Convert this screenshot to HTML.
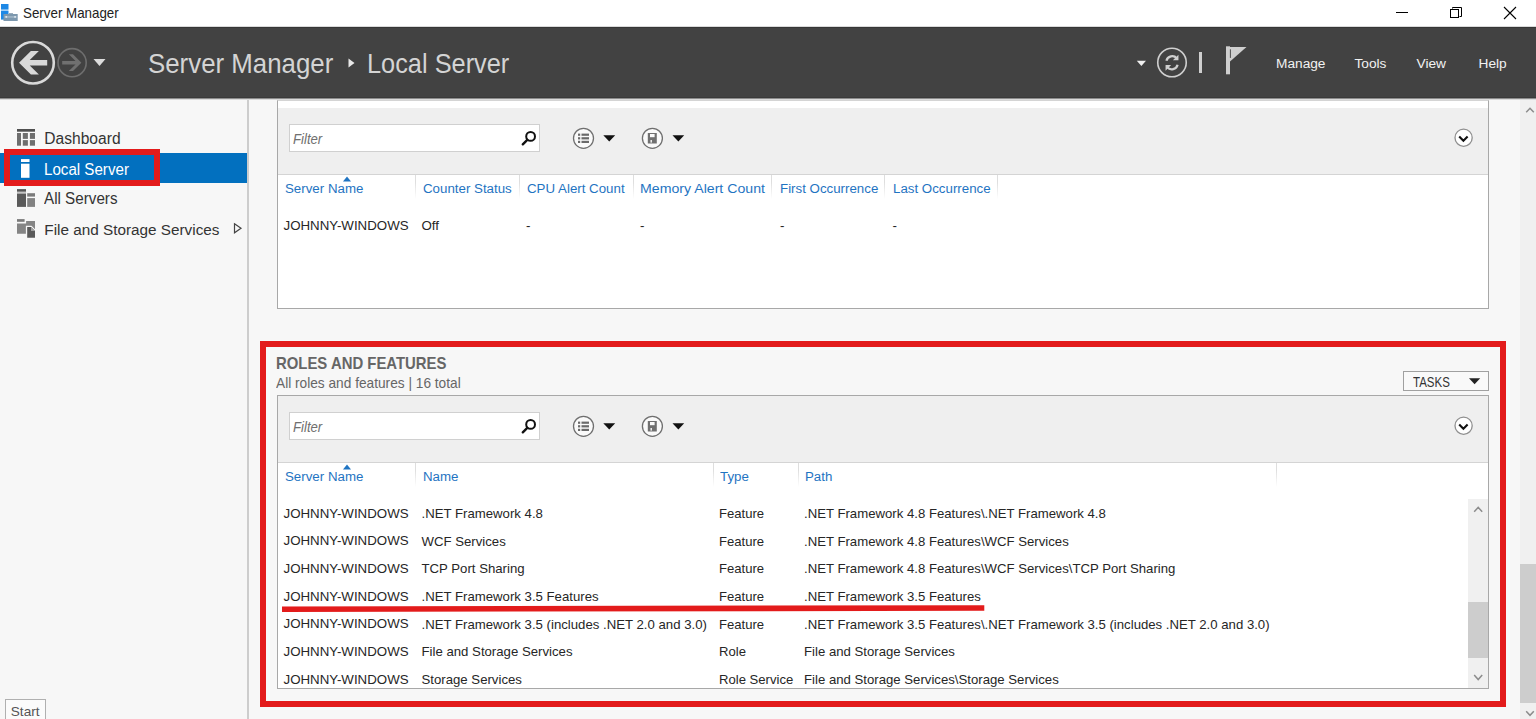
<!DOCTYPE html>
<html><head><meta charset="utf-8"><title>Server Manager</title>
<style>
html,body{margin:0;padding:0;width:1536px;height:719px;overflow:hidden;background:#f7f7f7;font-family:"Liberation Sans",sans-serif}
.r{position:absolute;margin:0;padding:0}
svg.r{overflow:visible}
.t{position:absolute;line-height:1;white-space:nowrap}
</style></head><body>
<div class="r" style="left:0px;top:0px;width:1536px;height:27px;background:#fff"></div>
<svg class="r" style="left:0;top:0" width="20" height="26" viewBox="0 0 20 26">
<rect x="1" y="4" width="7.5" height="5.6" fill="#1e88e5"/>
<rect x="1" y="10.6" width="7.5" height="9" fill="#1e88e5"/>
<rect x="9" y="13" width="4" height="0.9" fill="#8fa3b5"/>
<rect x="3.5" y="14" width="14.2" height="7" fill="#7d98ae"/>
<rect x="4.5" y="16.3" width="12.2" height="1.3" fill="#a9bccb"/>
<rect x="5.5" y="16.1" width="1.6" height="1.6" fill="#e6eef4"/>
<rect x="14.3" y="16.1" width="1.6" height="1.6" fill="#e6eef4"/>
</svg>
<div class="t " style="left:23.0px;top:6.34px;font-size:14.6px;color:#222;transform:scaleX(0.915);transform-origin:0 0">Server Manager</div>
<div class="r" style="left:1396px;top:12px;width:12px;height:1px;background:#000"></div>
<div class="r" style="left:1450px;top:9px;width:9px;height:9px;border:1px solid #000;box-sizing:border-box;background:#fff"></div>
<svg class="r" style="left:1448px;top:5px" width="16" height="16" viewBox="0 0 16 16"><path d="M4.5 3.5 V2.5 H13.5 V11.5 H11.5" fill="none" stroke="#000" stroke-width="1"/></svg>
<svg class="r" style="left:1502px;top:5px" width="16" height="16" viewBox="0 0 16 16"><path d="M2 2 L14 14 M14 2 L2 14" stroke="#000" stroke-width="1.1"/></svg>
<div class="r" style="left:0px;top:27px;width:1536px;height:71px;background:#424242"></div>
<div class="r" style="left:0px;top:27px;width:1536px;height:1px;background:#363636"></div>
<div class="r" style="left:0px;top:26px;width:1536px;height:1px;background:#dadada"></div>
<div class="r" style="left:0px;top:97px;width:1536px;height:1px;background:#3a3a3a"></div>
<div class="r" style="left:0px;top:98px;width:1536px;height:1px;background:#8c8c8c"></div>
<div class="r" style="left:0px;top:99px;width:1536px;height:1px;background:#dadada"></div>
<svg class="r" style="left:0;top:27px" width="120" height="71" viewBox="0 27 120 71">
<circle cx="33" cy="62.75" r="20.8" fill="none" stroke="#d9d9d9" stroke-width="2.6"/>
<path d="M30.9 50.9 H38.9 L29.75 60.05 H47.2 V65.45 H29.75 L38.9 74.6 H30.9 L19.05 62.75 Z" fill="#d9d9d9"/>
<circle cx="72.1" cy="62.7" r="14.1" fill="none" stroke="#6e6e6e" stroke-width="1.6"/>
<path d="M73 54.3 H68.8 L75.5 61 H62.2 V64.4 H75.5 L68.8 71.1 H73 L81.4 62.7 Z" fill="#707070"/>
<path d="M93.5 59 H105.5 L99.5 66 Z" fill="#dcdcdc"/>
</svg>
<div class="t " style="left:148.3px;top:50.47px;font-size:27.8px;color:#d4d4d4;transform:scaleX(0.93);transform-origin:0 0">Server Manager</div>
<svg class="r" style="left:345px;top:55px" width="12" height="14"><path d="M3.5 3.5 L9.5 8 L3.5 12.5 Z" fill="#e8e8e8"/></svg>
<div class="t " style="left:366.8px;top:50.47px;font-size:27.8px;color:#d4d4d4;transform:scaleX(0.912);transform-origin:0 0">Local Server</div>
<svg class="r" style="left:1130px;top:40px" width="130" height="45" viewBox="1130 40 130 45">
<path d="M1136.8 60.8 H1146 L1141.4 66 Z" fill="#f0f0f0"/>
<circle cx="1172" cy="62.5" r="14.25" fill="none" stroke="#cfcfcf" stroke-width="1.6"/>
<g transform="translate(1172 62.6) scale(0.86) translate(-1172 -62.6)">
<path d="M1165.5 60.5 A7 7 0 0 1 1177.5 57.5" fill="none" stroke="#cfcfcf" stroke-width="2.6"/>
<path d="M1179.5 53.5 L1179.5 60 L1173 60 Z" fill="#cfcfcf"/>
<path d="M1178.5 65 A7 7 0 0 1 1166.5 68" fill="none" stroke="#cfcfcf" stroke-width="2.6"/>
<path d="M1164.5 72 L1164.5 65.5 L1171 65.5 Z" fill="#cfcfcf"/>
</g>
<rect x="1199" y="52" width="3" height="21" fill="#cfcfcf"/>
<rect x="1226" y="46.3" width="4" height="28" fill="#cfcfcf"/>
<path d="M1230 47 H1246.5 L1230 61.5 Z" fill="#cfcfcf"/>
<rect x="1229.9" y="49.3" width="1" height="8.6" fill="#505050"/>
</svg>
<div class="t " style="left:1276.0px;top:56.90px;font-size:13.7px;color:#f2f2f2;">Manage</div>
<div class="t " style="left:1354.5px;top:56.90px;font-size:13.7px;color:#f2f2f2;">Tools</div>
<div class="t " style="left:1416.5px;top:56.90px;font-size:13.7px;color:#f2f2f2;">View</div>
<div class="t " style="left:1478.5px;top:56.90px;font-size:13.7px;color:#f2f2f2;">Help</div>
<div class="r" style="left:0px;top:100px;width:248px;height:619px;background:#f7f7f7"></div>
<div class="r" style="left:247px;top:100px;width:2px;height:619px;background:#cdcdcd"></div>
<div class="r" style="left:0px;top:153px;width:247px;height:30px;background:#0270bf"></div>
<svg class="r" style="left:0;top:120px" width="60" height="125" viewBox="0 120 60 125">
<rect x="17" y="129" width="18" height="2.7" fill="#4f4f4f"/>
<g fill="#6e6e6e">
<rect x="17" y="133" width="4" height="12.7"/>
<rect x="22.8" y="133" width="5.1" height="5.9"/><rect x="29.9" y="133" width="5.1" height="5.9"/>
<rect x="22.8" y="140.1" width="5.1" height="5.6"/><rect x="29.9" y="140.1" width="5.1" height="5.6"/>
</g>
<rect x="21" y="159.1" width="8.5" height="2.9" fill="#fff"/>
<rect x="21" y="163.7" width="8.5" height="14.1" fill="#fff"/>
<rect x="17" y="189.1" width="9" height="2.7" fill="#555"/>
<rect x="17" y="191.8" width="9" height="1.8" fill="#c4c4c4"/>
<rect x="17" y="193.6" width="9" height="13.3" fill="#5a5a5a"/>
<rect x="27.2" y="193.2" width="7.8" height="3.4" fill="#7a7a7a"/>
<rect x="27.2" y="198.1" width="7.8" height="8.8" fill="#828282"/>
<rect x="17" y="219.1" width="7.6" height="2.7" fill="#7a7a7a"/>
<path d="M17 223.6 H26.1 V221 H35 V233.7 H17 Z" fill="#858585"/>
<path d="M25.9 225.8 H31.5 L36.2 230.5 V239 H25.9 Z" fill="#f7f7f7"/>
<path d="M27.2 227 H31 L35 231 V237.7 H27.2 Z" fill="#5a5a5a"/>
<path d="M31 227 L35 231 H31 Z" fill="#a0a0a0"/>
</svg>
<div class="t " style="left:44.3px;top:130.79px;font-size:15.6px;color:#333;">Dashboard</div>
<div class="t " style="left:44.3px;top:161.59px;font-size:15.6px;color:#fff;transform:scaleX(0.97);transform-origin:0 0">Local Server</div>
<div class="t " style="left:44.3px;top:191.39px;font-size:15.6px;color:#333;transform:scaleX(0.975);transform-origin:0 0">All Servers</div>
<div class="t " style="left:44.3px;top:222.05px;font-size:15.3px;color:#333;">File and Storage Services</div>
<svg class="r" style="left:230px;top:220px" width="16" height="16" viewBox="230 220 16 16"><path d="M234.5 223.8 L241 228.3 L234.5 232.8 Z" fill="none" stroke="#444" stroke-width="1.2"/></svg>
<div class="r" style="left:4px;top:149px;width:156px;height:37px;border:6px solid #e31b1b;box-sizing:border-box"></div>
<div class="r" style="left:5px;top:699px;width:41px;height:21px;border:1px solid #b0b0b0;box-sizing:border-box;background:#fbfbfb"></div>
<div class="t " style="left:10.8px;top:704.69px;font-size:13.6px;color:#555;">Start</div>
<div class="r" style="left:249px;top:100px;width:1271px;height:619px;background:#f7f7f7"></div>
<div class="r" style="left:1520px;top:100px;width:16px;height:619px;background:#f0f0f0"></div>
<div class="r" style="left:1520px;top:564px;width:16px;height:139px;background:#cdcdcd"></div>
<svg class="r" style="left:1520px;top:100px" width="16" height="619" viewBox="1520 100 16 619"><path d="M1526.2 112.3 L1530 108.3 L1533.8 112.3" fill="none" stroke="#8c8c8c" stroke-width="1.5"/><path d="M1526.2 711.3 L1530 715.3 L1533.8 711.3" fill="none" stroke="#8c8c8c" stroke-width="1.5"/></svg>
<div class="r" style="left:277px;top:100px;width:1212px;height:209px;background:#fff;border:1px solid #a8a8a8;border-top:1px solid #d4d4d4;box-sizing:border-box"></div>
<div class="r" style="left:278px;top:108px;width:1210px;height:66px;background:#efefef"></div>
<div class="r" style="left:278px;top:174px;width:1210px;height:1px;background:#d4d4d4"></div>
<div class="r" style="left:289px;top:124px;width:251px;height:28px;background:#fff;border:1px solid #d0d0d0;box-sizing:border-box"></div>
<div class="t " style="left:293.0px;top:132.25px;font-size:14px;color:#707070;font-style:italic;transform:scaleX(0.94);transform-origin:0 0">Filter</div>
<svg class="r" style="left:510px;top:108px" width="190" height="60" viewBox="510 108 190 60">
<g transform="translate(0,0)">
<circle cx="530.6" cy="136.4" r="4.4" fill="none" stroke="#111" stroke-width="2"/>
<path d="M527.3 139.8 L522.8 144.3" stroke="#111" stroke-width="2.4" stroke-linecap="round"/>
<circle cx="583.5" cy="138.3" r="10" fill="#fafafa" stroke="#6f6f6f" stroke-width="1.3"/>
<g fill="#6a6a6a"><rect x="578" y="133.6" width="2.2" height="2.2"/><rect x="578" y="137.2" width="2.2" height="2.2"/><rect x="578" y="140.8" width="2.2" height="2.2"/>
<rect x="581.5" y="133.6" width="7.5" height="2.2"/><rect x="581.5" y="137.2" width="7.5" height="2.2"/><rect x="581.5" y="140.8" width="7.5" height="2.2"/></g>
<path d="M603.3 135.3 H615.2 L609.25 141.5 Z" fill="#111"/>
<circle cx="652.4" cy="138.3" r="10" fill="#fafafa" stroke="#6f6f6f" stroke-width="1.3"/>
<path d="M647.8 133 H656.8 V143.5 H647.8 Z" fill="#707070"/>
<rect x="650" y="134" width="4.6" height="3.2" fill="#fafafa"/>
<rect x="650.5" y="140" width="1.4" height="2.6" fill="#fafafa"/>
<path d="M672.5 135.3 H684.2 L678.35 141.5 Z" fill="#111"/>
<circle cx="1463.6" cy="137.7" r="8.6" fill="#fff" stroke="#8f8f8f" stroke-width="1.3"/>
<path d="M1459.2 136.5 L1463.4 140.7 L1467.6 136.5" fill="none" stroke="#111" stroke-width="2.1"/>
</g></svg>
<div class="r" style="left:415px;top:175px;width:1px;height:24px;background:linear-gradient(#dedede 30%,#ffffff)"></div>
<div class="r" style="left:519px;top:175px;width:1px;height:24px;background:linear-gradient(#dedede 30%,#ffffff)"></div>
<div class="r" style="left:633px;top:175px;width:1px;height:24px;background:linear-gradient(#dedede 30%,#ffffff)"></div>
<div class="r" style="left:771px;top:175px;width:1px;height:24px;background:linear-gradient(#dedede 30%,#ffffff)"></div>
<div class="r" style="left:884px;top:175px;width:1px;height:24px;background:linear-gradient(#dedede 30%,#ffffff)"></div>
<div class="r" style="left:997px;top:175px;width:1px;height:24px;background:linear-gradient(#dedede 30%,#ffffff)"></div>
<div class="t " style="left:284.5px;top:181.70px;font-size:13.7px;color:#1f74c2;transform:scaleX(0.972);transform-origin:0 0">Server Name</div>
<div class="t " style="left:422.5px;top:181.70px;font-size:13.7px;color:#1f74c2;transform:scaleX(0.972);transform-origin:0 0">Counter Status</div>
<div class="t " style="left:526.5px;top:181.70px;font-size:13.7px;color:#1f74c2;transform:scaleX(0.972);transform-origin:0 0">CPU Alert Count</div>
<div class="t " style="left:640.3px;top:181.70px;font-size:13.7px;color:#1f74c2;transform:scaleX(1.033);transform-origin:0 0">Memory Alert Count</div>
<div class="t " style="left:779.5px;top:181.70px;font-size:13.7px;color:#1f74c2;transform:scaleX(0.972);transform-origin:0 0">First Occurrence</div>
<div class="t " style="left:892.5px;top:181.70px;font-size:13.7px;color:#1f74c2;transform:scaleX(0.972);transform-origin:0 0">Last Occurrence</div>
<svg class="r" style="left:342px;top:175px" width="10" height="8"><path d="M1 6.6 L5 1.5 L9 6.6 Z" fill="#1f74c2"/></svg>
<div class="t " style="left:283.5px;top:218.54px;font-size:13.3px;color:#262626;">JOHNNY-WINDOWS</div>
<div class="t " style="left:421.5px;top:218.54px;font-size:13.3px;color:#262626;">Off</div>
<div class="t " style="left:526.0px;top:218.54px;font-size:13.3px;color:#262626;">-</div>
<div class="t " style="left:640.0px;top:218.54px;font-size:13.3px;color:#262626;">-</div>
<div class="t " style="left:780.0px;top:218.54px;font-size:13.3px;color:#262626;">-</div>
<div class="t " style="left:892.5px;top:218.54px;font-size:13.3px;color:#262626;">-</div>
<div class="t " style="left:275.5px;top:355.29px;font-size:16.2px;color:#666;font-weight:bold;transform:scaleX(0.92);transform-origin:0 0">ROLES AND FEATURES</div>
<div class="t " style="left:275.5px;top:375.58px;font-size:14.2px;color:#666;transform:scaleX(0.965);transform-origin:0 0">All roles and features | 16 total</div>
<div class="r" style="left:1403px;top:371px;width:86px;height:20px;border:1px solid #a0a0a0;box-sizing:border-box;background:#f9f9f9"></div>
<div class="t " style="left:1413.0px;top:374.81px;font-size:14.4px;color:#333;transform:scaleX(0.80);transform-origin:0 0">TASKS</div>
<svg class="r" style="left:1466px;top:376px" width="16" height="10"><path d="M3 2.2 H14.2 L8.6 8.2 Z" fill="#222"/></svg>
<div class="r" style="left:277px;top:395px;width:1212px;height:294px;background:#fff;border:1px solid #a8a8a8;box-sizing:border-box"></div>
<div class="r" style="left:278px;top:396px;width:1210px;height:66px;background:#efefef"></div>
<div class="r" style="left:278px;top:462px;width:1210px;height:1px;background:#d4d4d4"></div>
<div class="r" style="left:289px;top:412px;width:251px;height:28px;background:#fff;border:1px solid #d0d0d0;box-sizing:border-box"></div>
<div class="t " style="left:293.0px;top:420.25px;font-size:14px;color:#707070;font-style:italic;transform:scaleX(0.94);transform-origin:0 0">Filter</div>
<svg class="r" style="left:510px;top:396px" width="190" height="60" viewBox="510 396 190 60">
<g transform="translate(0,288)">
<circle cx="530.6" cy="136.4" r="4.4" fill="none" stroke="#111" stroke-width="2"/>
<path d="M527.3 139.8 L522.8 144.3" stroke="#111" stroke-width="2.4" stroke-linecap="round"/>
<circle cx="583.5" cy="138.3" r="10" fill="#fafafa" stroke="#6f6f6f" stroke-width="1.3"/>
<g fill="#6a6a6a"><rect x="578" y="133.6" width="2.2" height="2.2"/><rect x="578" y="137.2" width="2.2" height="2.2"/><rect x="578" y="140.8" width="2.2" height="2.2"/>
<rect x="581.5" y="133.6" width="7.5" height="2.2"/><rect x="581.5" y="137.2" width="7.5" height="2.2"/><rect x="581.5" y="140.8" width="7.5" height="2.2"/></g>
<path d="M603.3 135.3 H615.2 L609.25 141.5 Z" fill="#111"/>
<circle cx="652.4" cy="138.3" r="10" fill="#fafafa" stroke="#6f6f6f" stroke-width="1.3"/>
<path d="M647.8 133 H656.8 V143.5 H647.8 Z" fill="#707070"/>
<rect x="650" y="134" width="4.6" height="3.2" fill="#fafafa"/>
<rect x="650.5" y="140" width="1.4" height="2.6" fill="#fafafa"/>
<path d="M672.5 135.3 H684.2 L678.35 141.5 Z" fill="#111"/>
<circle cx="1463.6" cy="137.7" r="8.6" fill="#fff" stroke="#8f8f8f" stroke-width="1.3"/>
<path d="M1459.2 136.5 L1463.4 140.7 L1467.6 136.5" fill="none" stroke="#111" stroke-width="2.1"/>
</g></svg>
<div class="r" style="left:415px;top:463px;width:1px;height:24px;background:linear-gradient(#dedede 30%,#ffffff)"></div>
<div class="r" style="left:713px;top:463px;width:1px;height:24px;background:linear-gradient(#dedede 30%,#ffffff)"></div>
<div class="r" style="left:798px;top:463px;width:1px;height:24px;background:linear-gradient(#dedede 30%,#ffffff)"></div>
<div class="r" style="left:1276px;top:463px;width:1px;height:24px;background:linear-gradient(#dedede 30%,#ffffff)"></div>
<div class="t " style="left:284.5px;top:469.70px;font-size:13.7px;color:#1f74c2;transform:scaleX(0.972);transform-origin:0 0">Server Name</div>
<div class="t " style="left:423.0px;top:469.70px;font-size:13.7px;color:#1f74c2;transform:scaleX(0.972);transform-origin:0 0">Name</div>
<div class="t " style="left:719.5px;top:469.70px;font-size:13.7px;color:#1f74c2;transform:scaleX(0.972);transform-origin:0 0">Type</div>
<div class="t " style="left:805.0px;top:469.70px;font-size:13.7px;color:#1f74c2;transform:scaleX(0.972);transform-origin:0 0">Path</div>
<svg class="r" style="left:342px;top:463px" width="10" height="8"><path d="M1 6.6 L5 1.5 L9 6.6 Z" fill="#1f74c2"/></svg>
<div class="t " style="left:283.5px;top:506.84px;font-size:13.3px;color:#262626;">JOHNNY-WINDOWS</div>
<div class="t " style="left:421.5px;top:506.93px;font-size:13.2px;color:#262626;">.NET Framework 4.8</div>
<div class="t " style="left:719.0px;top:507.01px;font-size:13.1px;color:#262626;">Feature</div>
<div class="t " style="left:804.0px;top:506.94px;font-size:13.18px;color:#262626;">.NET Framework 4.8 Features\.NET Framework 4.8</div>
<div class="t " style="left:283.5px;top:534.49px;font-size:13.3px;color:#262626;">JOHNNY-WINDOWS</div>
<div class="t " style="left:421.5px;top:534.58px;font-size:13.2px;color:#262626;">WCF Services</div>
<div class="t " style="left:719.0px;top:534.66px;font-size:13.1px;color:#262626;">Feature</div>
<div class="t " style="left:804.0px;top:534.59px;font-size:13.18px;color:#262626;">.NET Framework 4.8 Features\WCF Services</div>
<div class="t " style="left:283.5px;top:562.14px;font-size:13.3px;color:#262626;">JOHNNY-WINDOWS</div>
<div class="t " style="left:421.5px;top:562.23px;font-size:13.2px;color:#262626;">TCP Port Sharing</div>
<div class="t " style="left:719.0px;top:562.31px;font-size:13.1px;color:#262626;">Feature</div>
<div class="t " style="left:804.0px;top:562.24px;font-size:13.18px;color:#262626;">.NET Framework 4.8 Features\WCF Services\TCP Port Sharing</div>
<div class="t " style="left:283.5px;top:589.79px;font-size:13.3px;color:#262626;">JOHNNY-WINDOWS</div>
<div class="t " style="left:421.5px;top:589.88px;font-size:13.2px;color:#262626;">.NET Framework 3.5 Features</div>
<div class="t " style="left:719.0px;top:589.96px;font-size:13.1px;color:#262626;">Feature</div>
<div class="t " style="left:804.0px;top:589.89px;font-size:13.18px;color:#262626;">.NET Framework 3.5 Features</div>
<div class="t " style="left:283.5px;top:617.44px;font-size:13.3px;color:#262626;">JOHNNY-WINDOWS</div>
<div class="t " style="left:421.5px;top:617.53px;font-size:13.2px;color:#262626;">.NET Framework 3.5 (includes .NET 2.0 and 3.0)</div>
<div class="t " style="left:719.0px;top:617.61px;font-size:13.1px;color:#262626;">Feature</div>
<div class="t " style="left:804.0px;top:617.54px;font-size:13.18px;color:#262626;">.NET Framework 3.5 Features\.NET Framework 3.5 (includes .NET 2.0 and 3.0)</div>
<div class="t " style="left:283.5px;top:645.09px;font-size:13.3px;color:#262626;">JOHNNY-WINDOWS</div>
<div class="t " style="left:421.5px;top:645.18px;font-size:13.2px;color:#262626;">File and Storage Services</div>
<div class="t " style="left:719.0px;top:645.26px;font-size:13.1px;color:#262626;">Role</div>
<div class="t " style="left:804.0px;top:645.19px;font-size:13.18px;color:#262626;">File and Storage Services</div>
<div class="t " style="left:283.5px;top:672.74px;font-size:13.3px;color:#262626;">JOHNNY-WINDOWS</div>
<div class="t " style="left:421.5px;top:672.83px;font-size:13.2px;color:#262626;">Storage Services</div>
<div class="t " style="left:719.0px;top:672.91px;font-size:13.1px;color:#262626;">Role Service</div>
<div class="t " style="left:804.0px;top:672.84px;font-size:13.18px;color:#262626;">File and Storage Services\Storage Services</div>
<div class="r" style="left:278px;top:688px;width:1210px;height:1px;background:#a8a8a8"></div>
<div class="r" style="left:1468px;top:499px;width:20px;height:189px;background:#f0f0f0"></div>
<div class="r" style="left:1468px;top:602px;width:20px;height:56px;background:#cdcdcd"></div>
<svg class="r" style="left:1468px;top:499px" width="20" height="189" viewBox="1468 499 20 189"><path d="M1474.2 511.8 L1478.2 507.4 L1482.2 511.8" fill="none" stroke="#8c8c8c" stroke-width="1.5"/><path d="M1474.2 675 L1478.2 679.6 L1482.2 675" fill="none" stroke="#8c8c8c" stroke-width="1.5"/></svg>
<div class="r" style="left:260px;top:341px;width:1246px;height:366px;border:6px solid #e31b1b;box-sizing:border-box"></div>
<svg class="r" style="left:270px;top:598px" width="730" height="20" viewBox="270 598 730 20"><path d="M282 609.2 L984.3 608" stroke="#e31b1b" stroke-width="5.6" stroke-linecap="butt"/></svg>
</body></html>
